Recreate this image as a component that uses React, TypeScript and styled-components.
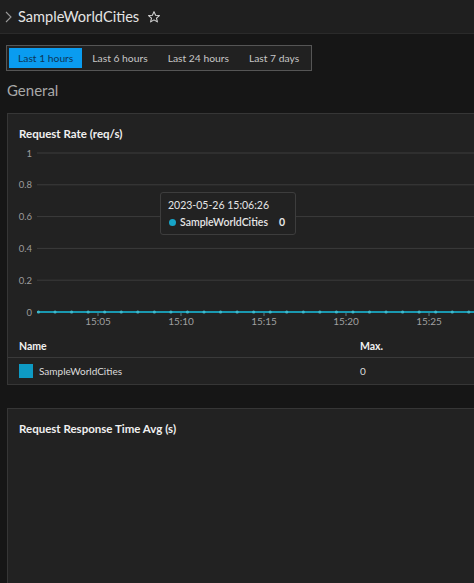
import React from "react";
import styled, { createGlobalStyle } from "styled-components";

const GlobalStyle = createGlobalStyle`
  html, body {
    margin: 0;
    padding: 0;
    background: #161616;
    overflow: hidden;
    font-family: Lato, "Noto Sans", "DejaVu Sans", sans-serif;
  }
  * { box-sizing: border-box; }
`;

const Page = styled.div`
  width: 474px;
  height: 583px;
  overflow: hidden;
  background: #161616;
`;

const Header = styled.header`
  height: 34px;
  display: flex;
  align-items: center;
  padding-left: 3px;
  background: #1f1f1f;
  border-bottom: 1px solid #2a2a2a;
`;

const HeaderTitle = styled.h1`
  margin: 0 0 0 5px;
  font-size: 14.6px;
  font-weight: 400;
  color: #e4e4e4;
`;

const IconBox = styled.span<{ $ml?: number }>`
  display: inline-flex;
  margin-left: ${(p) => p.$ml ?? 0}px;
`;

const Main = styled.main`
  padding: 11px 0 0 7px;
`;

const Segmented = styled.div`
  display: inline-flex;
  border: 1px solid #555;
  background: #212121;
  padding: 2px;
  margin-left: -1px;
`;

const Segment = styled.button<{ $active?: boolean }>`
  border: none;
  height: 20px;
  padding: 0 ${(p) => (p.$active ? 9 : 10)}px;
  background: ${(p) => (p.$active ? "#0a9cf0" : "transparent")};
  color: ${(p) => (p.$active ? "#0c3658" : "#c6c6c6")};
  font-family: inherit;
  font-size: 10.3px;
  cursor: pointer;
`;

const SectionTitle = styled.h2`
  margin: 10px 0 0 0;
  font-size: 15px;
  font-weight: 400;
  color: #a8a8a8;
`;

const Card = styled.section<{ $mt: number; $h?: number }>`
  margin-top: ${(p) => p.$mt}px;
  width: 540px;
  ${(p) => (p.$h ? `height: ${p.$h}px;` : "")}
  background: #222222;
  border: 1px solid #363636;
`;

const CardTitle = styled.h3<{ $pt: number }>`
  margin: 0;
  padding: ${(p) => p.$pt}px 0 0 11px;
  font-size: 11.5px;
  font-weight: 700;
  color: #f0f0f0;
`;

const ChartWrap = styled.div`
  position: relative;
  height: 190px;
  margin-top: 5px;
`;

const Tooltip = styled.div`
  position: absolute;
  left: 152px;
  top: 47px;
  width: 136px;
  height: 43px;
  padding: 6px 7px;
  background: #222;
  border: 1px solid #3d3d3d;
  border-radius: 3px;
  color: #e6e6e6;
  font-size: 10.5px;
`;

const TooltipRow = styled.div`
  display: flex;
  align-items: center;
  margin-top: 5px;
`;

const Dot = styled.span`
  width: 7px;
  height: 7px;
  border-radius: 50%;
  background: #17a5c8;
  margin: 0 4px 0 1px;
`;

const TooltipName = styled.span`
  flex: 1;
  font-weight: 600;
`;

const TooltipValue = styled.span`
  font-weight: 700;
  margin-right: 3px;
`;

const TableHead = styled.div`
  display: grid;
  grid-template-columns: 341px 1fr;
  height: 23px;
  align-items: center;
  padding-left: 11px;
  border-bottom: 1px solid #3a3a3a;
  font-size: 10.5px;
  font-weight: 700;
  color: #f0f0f0;
`;

const TableRow = styled.div`
  display: grid;
  grid-template-columns: 341px 1fr;
  height: 26px;
  align-items: center;
  padding-left: 11px;
  font-size: 10px;
  color: #dcdcdc;
`;

const NameCell = styled.div`
  display: flex;
  align-items: center;
`;

const Swatch = styled.span<{ $color: string }>`
  width: 14px;
  height: 14px;
  background: ${(p) => p.$color};
  margin-right: 6px;
`;

const ChevronIcon = () => (
  <svg width="10" height="14" viewBox="0 0 10 14">
    <path d="M3 2 L8 7 L3 12" fill="none" stroke="#9a9a9a" strokeWidth="1.1" />
  </svg>
);

const StarIcon = () => (
  <svg width="14" height="14" viewBox="0 0 24 24">
    <path
      d="M12 2.8 L14.7 8.9 L21.3 9.5 L16.3 13.9 L17.8 20.4 L12 17 L6.2 20.4 L7.7 13.9 L2.7 9.5 L9.3 8.9 Z"
      fill="none"
      stroke="#d8d8d8"
      strokeWidth="1.8"
      strokeLinejoin="round"
    />
  </svg>
);

const yTicks = [
  { label: "1", y: 8 },
  { label: "0.8", y: 39.8 },
  { label: "0.6", y: 71.6 },
  { label: "0.4", y: 103.4 },
  { label: "0.2", y: 135.2 },
  { label: "0", y: 167 },
];

const xTicks = [
  { label: "15:05", x: 90 },
  { label: "15:10", x: 173 },
  { label: "15:15", x: 256 },
  { label: "15:20", x: 338 },
  { label: "15:25", x: 421 },
];

const RateChart = () => {
  const dots: number[] = [];
  for (let x = 30.5; x < 540; x += 16.55) dots.push(x);
  return (
    <svg width="540" height="190" viewBox="0 0 540 190">
      {yTicks.map((t) => (
        <g key={t.label}>
          {t.label !== "0" && (
            <line x1={29} x2={540} y1={t.y} y2={t.y} stroke="#3c3c3c" strokeWidth="1" />
          )}
          <text
            x={24}
            y={t.y + 3.5}
            textAnchor="end"
            fontSize="9.5"
            fill="#9c9c9c"
            fontFamily="Lato, sans-serif"
          >
            {t.label}
          </text>
        </g>
      ))}
      {xTicks.map((t) => (
        <g key={t.label}>
          <line x1={t.x} x2={t.x} y1={167} y2={171} stroke="#5a7f86" strokeWidth="1" />
          <text
            x={t.x}
            y={180}
            textAnchor="middle"
            fontSize="10"
            fill="#a0a0a0"
            fontFamily="Lato, sans-serif"
          >
            {t.label}
          </text>
        </g>
      ))}
      <line x1={29} x2={540} y1={167} y2={167} stroke="#1a98b0" strokeWidth="2" />
      {dots.map((x) => (
        <circle key={x} cx={x} cy={167} r={1.6} fill="#3fb9cc" />
      ))}
    </svg>
  );
};

export default function App() {
  return (
    <Page>
      <GlobalStyle />
      <Header>
        <IconBox>
          <ChevronIcon />
        </IconBox>
        <HeaderTitle>SampleWorldCities</HeaderTitle>
        <IconBox $ml={8}>
          <StarIcon />
        </IconBox>
      </Header>
      <Main>
        <Segmented>
          <Segment $active>Last 1 hours</Segment>
          <Segment>Last 6 hours</Segment>
          <Segment>Last 24 hours</Segment>
          <Segment>Last 7 days</Segment>
        </Segmented>
        <SectionTitle>General</SectionTitle>
        <Card $mt={14}>
          <CardTitle $pt={13}>Request Rate (req/s)</CardTitle>
          <ChartWrap>
            <RateChart />
            <Tooltip>
              <div>2023-05-26 15:06:26</div>
              <TooltipRow>
                <Dot />
                <TooltipName>SampleWorldCities</TooltipName>
                <TooltipValue>0</TooltipValue>
              </TooltipRow>
            </Tooltip>
          </ChartWrap>
          <TableHead>
            <div>Name</div>
            <div>Max.</div>
          </TableHead>
          <TableRow>
            <NameCell>
              <Swatch $color="#0e9ac4" />
              SampleWorldCities
            </NameCell>
            <div>0</div>
          </TableRow>
        </Card>
        <Card $mt={23} $h={200}>
          <CardTitle $pt={13}>Request Response Time Avg (s)</CardTitle>
        </Card>
      </Main>
    </Page>
  );
}
